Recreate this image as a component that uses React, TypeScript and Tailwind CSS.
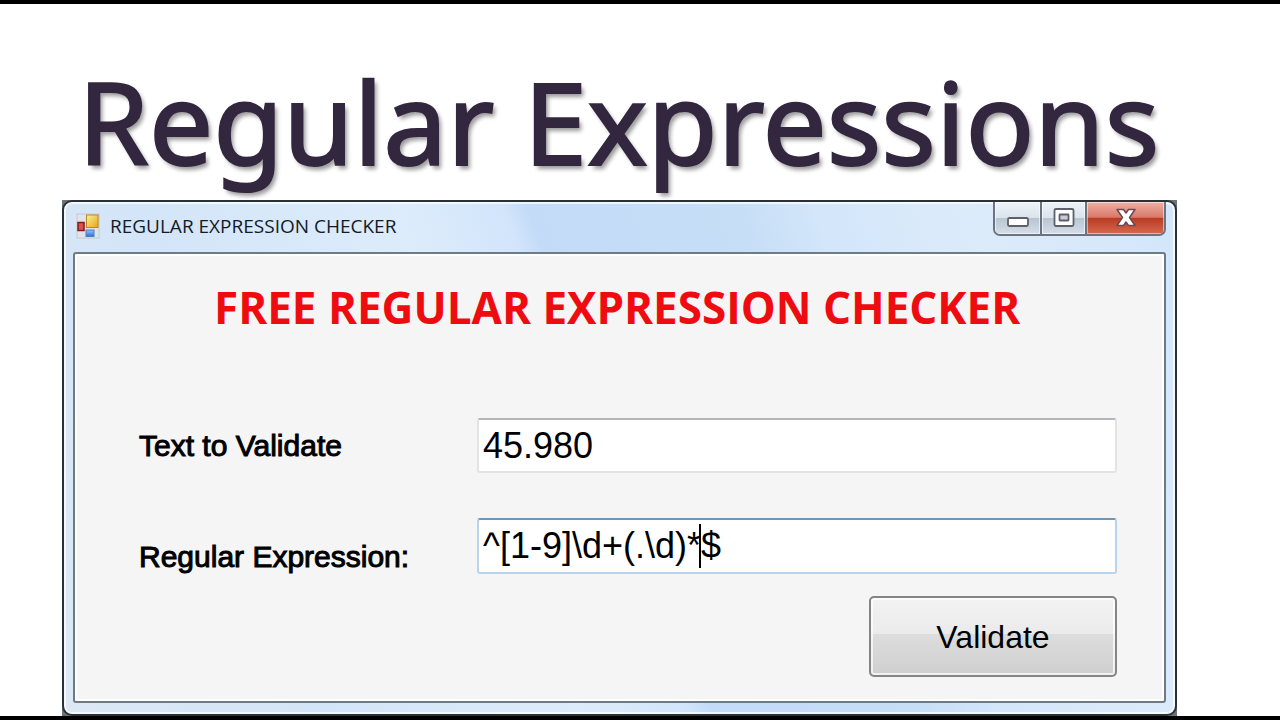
import { useState } from 'react';

function FormIcon() {
  return (
    <svg width="24" height="26" viewBox="0 0 24 26" aria-hidden="true">
      <defs>
        <linearGradient id="gold" x1="0" y1="0" x2="1" y2="1">
          <stop offset="0" stopColor="#fdf0a0" />
          <stop offset="1" stopColor="#e8a70c" />
        </linearGradient>
        <linearGradient id="blue" x1="0" y1="0" x2="0" y2="1">
          <stop offset="0" stopColor="#9cc4f5" />
          <stop offset="1" stopColor="#2e6fd0" />
        </linearGradient>
      </defs>
      <rect x="1" y="1" width="22" height="24" fill="#dfe3ea" stroke="#c3c9d4" />
      <rect x="10.5" y="2" width="11.5" height="12.5" fill="url(#gold)" stroke="#b98a1c" />
      <rect x="2" y="9.5" width="6" height="8" fill="#d9534a" stroke="#8e1510" strokeWidth="1.5" />
      <rect x="10" y="17" width="8" height="6.5" fill="url(#blue)" stroke="#4a7fce" />
    </svg>
  );
}

function MinimizeIcon() {
  return (
    <svg width="22" height="22" viewBox="0 0 22 22" aria-hidden="true">
      <rect x="1" y="11" width="20" height="8" rx="1.5" fill="#fff" stroke="#5b606b" strokeWidth="1.8" />
    </svg>
  );
}

function MaximizeIcon() {
  return (
    <svg width="22" height="22" viewBox="0 0 22 22" aria-hidden="true">
      <rect x="1.5" y="2" width="19" height="17" rx="1.5" fill="#fff" stroke="#5b606b" strokeWidth="1.8" />
      <rect x="6.5" y="7.5" width="9" height="6" rx="0.5" fill="#c9cdd4" stroke="#5b606b" strokeWidth="1.8" />
    </svg>
  );
}

function CloseIcon() {
  return (
    <svg width="22" height="22" viewBox="0 0 22 22" aria-hidden="true">
      <path
        d="M2 2.5h6.5L11 6l2.5-3.5H20l-5.5 8 5.5 8h-6.5L11 15l-2.5 3.5H2l5.5-8z"
        fill="#fff"
        stroke="#6a4a50"
        strokeWidth="1.5"
        strokeLinejoin="round"
      />
    </svg>
  );
}

function TitleBar() {
  return (
    <header className="flex h-[50px] items-start justify-between pr-[9px] pl-3">
      <div className="flex h-[48px] items-center gap-[10px]">
        <FormIcon />
        <span className="font-['Open_Sans',sans-serif] text-[19px] whitespace-nowrap text-[#141a26]">
          REGULAR EXPRESSION CHECKER
        </span>
      </div>
      <div className="flex h-[34px] overflow-hidden rounded-b-[7px] border-2 border-t-0 border-[#6b7380]">
        <button
          aria-label="Minimize"
          className="flex w-[47px] items-center justify-center border-r-2 border-[#6b7380] bg-[linear-gradient(#eef3f8,#dbe3ec_49%,#b9c4d2_50%,#d3deea)] inset-ring inset-ring-white/60"
        >
          <MinimizeIcon />
        </button>
        <button
          aria-label="Maximize"
          className="flex w-[45px] items-center justify-center border-r-2 border-[#6b7380] bg-[linear-gradient(#eef3f8,#dbe3ec_49%,#b9c4d2_50%,#d3deea)] inset-ring inset-ring-white/60"
        >
          <MaximizeIcon />
        </button>
        <button
          aria-label="Close"
          className="flex w-[77px] items-center justify-center bg-[linear-gradient(#eeb0a3,#d9796a_48%,#bb3a23_50%,#d5694f)] inset-ring inset-ring-white/50"
        >
          <CloseIcon />
        </button>
      </div>
    </header>
  );
}

export default function App() {
  const [text, setText] = useState('45.980');
  const [pattern, setPattern] = useState('^[1-9]\\d+(.\\d)*$');

  return (
    <main className="flex min-h-screen flex-col border-y-4 border-black bg-white">
      <h1 className="h-[196px] pt-[22px] pl-[78px] font-['Noto_Sans',sans-serif] text-[114px] leading-[190px] font-normal whitespace-nowrap text-[#33273f] [-webkit-text-stroke:2px_#33273f] [text-shadow:3px_4px_4px_#00000066]">
        Regular Expressions
      </h1>

      {/* Window frame */}
      <div className="mr-[103px] ml-[62px] flex flex-1 flex-col bg-[#6d7478]">
        <section className="flex flex-1 flex-col rounded-[10px] border-2 border-[#2b3236] bg-[linear-gradient(70deg,#dce8f5,#d3e5f8_20%,#dcecfb_40%,#d3e5fb_48%,#c3dbf7_50%,#c6def6_66%,#d3e6fa_72%,#dcebfa_84%,#d3e6fa)] inset-ring-2 inset-ring-white/70">
          <TitleBar />

          <form
            className="mx-[9px] mb-[11px] flex flex-1 flex-col rounded-[3px] border-2 border-[#6f7b84] bg-[#f5f5f5] pt-[18px] pr-[47px] pl-[64px] font-['Liberation_Sans',sans-serif] text-black inset-ring-2 inset-ring-white"
            onSubmit={(e) => e.preventDefault()}
          >
            <h2 className="pl-[75px] font-['Open_Sans',sans-serif] text-[44px] leading-[70px] font-bold whitespace-nowrap text-[#ee0c10]">
              FREE REGULAR EXPRESSION CHECKER
            </h2>

            <div className="mt-[76px] flex items-center">
              <label htmlFor="text" className="w-[338px] text-[30px] leading-[34px] [-webkit-text-stroke:1px_black]">
                Text to Validate
              </label>
              <input
                id="text"
                value={text}
                onChange={(e) => setText(e.target.value)}
                className="h-[55px] min-w-0 flex-1 rounded-[3px] border-2 border-[#e2e3e6] border-t-[#b4b5b9] bg-white px-1 text-[36px] outline-none"
              />
            </div>

            <div className="mt-[45px] flex items-end">
              <label htmlFor="pattern" className="w-[338px] text-[30px] leading-[34px] [-webkit-text-stroke:1px_black]">
                Regular Expression:
              </label>
              <div className="relative min-w-0 flex-1">
                <input
                  id="pattern"
                  value={pattern}
                  onChange={(e) => setPattern(e.target.value)}
                  className="block h-[56px] w-full rounded-[3px] border-2 border-[#b9d4ea] border-t-[#6f97b5] bg-white px-1 text-[36px] outline-none"
                />
                {/* Text caret */}
                <span className="absolute top-[6px] left-[222px] h-[44px] w-[2px] bg-black" />
              </div>
            </div>

            <button
              type="submit"
              className="mt-[22px] h-[81px] w-[248px] self-end rounded-[5px] border-2 border-[#858585] bg-[linear-gradient(#f2f2f2,#ebebeb_46%,#dddddd_47%,#cfcfcf)] text-[32px] inset-ring-2 inset-ring-white/70"
            >
              Validate
            </button>
          </form>
        </section>
      </div>
    </main>
  );
}
